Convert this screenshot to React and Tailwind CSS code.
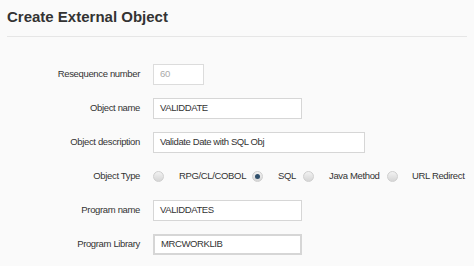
import React from 'react';

const font = { fontFamily: '"Liberation Sans", Arial, sans-serif' };

function Radio({ checked }) {
  return (
    <span className="inline-flex shrink-0 items-center justify-center w-[11px] h-[11px] rounded-full border border-[#cfcfcf] bg-gradient-to-b from-[#f2f2f2] to-[#d6d6d6]">
      {checked && <span className="w-[5px] h-[5px] rounded-full bg-[#2f4f6b]" />}
    </span>
  );
}

function Row({ label, children }) {
  return (
    <div className="flex items-center h-[34px]">
      <div className="w-[140px] text-right text-[9.5px] tracking-[-0.35px] text-[#333] whitespace-nowrap">{label}</div>
      <div className="ml-[13px] flex items-center">{children}</div>
    </div>
  );
}

export default function App() {
  const inputCls = 'h-[21px] border border-[#d6d6d6] bg-white px-[6px] text-[9.5px] tracking-[-0.4px] text-[#333] flex items-center whitespace-nowrap';

  return (
    <div className="w-[474px] h-[266px] bg-[#fafafa] overflow-hidden" style={font}>
      <div className="px-[7px] pt-[6px]">
        <h1 className="text-[15px] font-bold text-[#333] leading-[22px]">Create External Object</h1>
        <div className="mt-[8px] h-px bg-[#e6e6e6]" />
      </div>

      <div className="mt-[20px]">
        <Row label="Resequence number">
          <div className={`${inputCls} w-[51px] bg-[#ececec] border-[#dcdcdc] text-[#aaa]`}>60</div>
        </Row>
        <Row label="Object name">
          <div className={`${inputCls} w-[149px]`}>VALIDDATE</div>
        </Row>
        <Row label="Object description">
          <div className={`${inputCls} w-[212px]`}>Validate Date with SQL Obj</div>
        </Row>
        <Row label="Object Type">
          <div className="flex items-center text-[9.5px] tracking-[-0.35px] text-[#333] whitespace-nowrap">
            <Radio />
            <span className="ml-[15px] w-[73px]">RPG/CL/COBOL</span>
            <Radio checked />
            <span className="ml-[15px] w-[25px]">SQL</span>
            <Radio />
            <span className="ml-[15px] w-[58px]">Java Method</span>
            <Radio />
            <span className="ml-[14px]">URL Redirect</span>
          </div>
        </Row>
        <Row label="Program name">
          <div className={`${inputCls} w-[149px]`}>VALIDDATES</div>
        </Row>
        <Row label="Program Library">
          <div className={`${inputCls} w-[149px] border-2 border-[#8da5b9] px-[5px]`}>MRCWORKLIB</div>
        </Row>
      </div>
    </div>
  );
}
